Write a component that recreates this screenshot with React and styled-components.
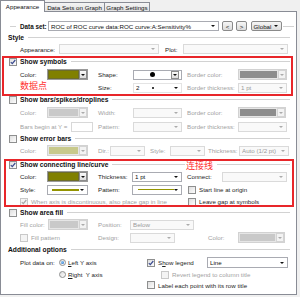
import React from "react";
import styled, { createGlobalStyle } from "styled-components";

const GlobalStyle = createGlobalStyle`
  html, body {
    margin: 0;
    padding: 0;
    background: #f0f0f0;
  }
  body {
    font-family: "Liberation Sans", Arial, sans-serif;
    font-size: 6.2px;
    color: #1e1e1e;
  }
`;

const Window = styled.div`
  width: 300px;
  height: 297px;
  background: #f0f0f0;
  overflow: hidden;
`;

const TabBar = styled.div`
  display: flex;
  align-items: flex-end;
  height: 11px;
  padding-left: 1px;
`;

const Tab = styled.div`
  position: relative;
  z-index: ${(p) => (p.$active ? 2 : 1)};
  height: ${(p) => (p.$active ? 12 : 9)}px;
  margin-bottom: ${(p) => (p.$active ? -1 : 0)}px;
  margin-left: -1px;
  width: ${(p) => p.$w}px;
  box-sizing: border-box;
  border: 1px solid #898c95;
  border-bottom: none;
  background: ${(p) => (p.$active ? "#fff" : "linear-gradient(#f4f4f4, #e2e2e2)")};
  display: flex;
  align-items: center;
  justify-content: center;
  white-space: nowrap;
  color: #111;
`;

const Panel = styled.div`
  position: relative;
  width: 297px;
  height: 284px;
  box-sizing: border-box;
  border: 1px solid #898c95;
  background: #fff;
  padding-top: 8px;
`;

const Row = styled.div`
  display: flex;
  align-items: center;
  height: ${(p) => p.$h || 13}px;
  margin-top: ${(p) => p.$mt || 0}px;
  padding-left: ${(p) => (p.$pl === undefined ? 19 : p.$pl)}px;
  white-space: nowrap;
`;

const Label = styled.span`
  flex: none;
  width: ${(p) => p.$w}px;
  margin-left: ${(p) => p.$ml || 0}px;
  color: ${(p) => (p.$off ? "#a2a2a2" : "#1e1e1e")};
  white-space: nowrap;
  overflow: visible;
`;

const Note = styled.span`
  flex: none;
  width: ${(p) => p.$w}px;
  margin-bottom: 4px;
  font-family: "Noto Sans CJK SC", "Liberation Sans", sans-serif;
  font-size: 9px;
  line-height: 9px;
  color: #ff3030;
`;

const FloatNote = styled(Note)`
  position: absolute;
  left: 184px;
  top: 2px;
  margin: 0;
  background: #fff;
  padding: 0 1px;
`;

const Title = styled.span`
  flex: none;
  width: ${(p) => (p.$w ? `${p.$w}px` : "auto")};
  font-weight: bold;
  font-size: ${(p) => p.$size || 6.7}px;
  color: #111;
  white-space: nowrap;
`;

const Rule = styled.span`
  flex: ${(p) => (p.$w ? "none" : 1)};
  width: ${(p) => (p.$w ? `${p.$w}px` : "auto")};
  height: 1px;
  background: #d2d2d2;
  margin-left: ${(p) => (p.$ml === undefined ? 4 : p.$ml)}px;
  margin-right: ${(p) => (p.$mr === undefined ? 6 : p.$mr)}px;
`;

const Combo = styled.div`
  flex: none;
  display: flex;
  align-items: center;
  width: ${(p) => p.$w}px;
  height: ${(p) => p.$h || 10}px;
  margin-left: ${(p) => p.$ml || 0}px;
  box-sizing: border-box;
  border: 1px solid ${(p) => (p.$off ? "#dadada" : p.$faint ? "#e4e4e4" : "#a9abb2")};
  background: ${(p) => (p.$off ? "#f9f9f9" : "#fff")};
  color: ${(p) => (p.$off ? "#9a9a9a" : "#111")};
  padding: 0 2px 0 2px;
  overflow: hidden;
`;

const ComboText = styled.span`
  flex: 1;
  overflow: hidden;
  white-space: nowrap;
`;

const Arrow = styled.span`
  flex: none;
  width: 0;
  height: 0;
  border-left: 2px solid transparent;
  border-right: 2px solid transparent;
  border-top: 2.5px solid ${(p) => (p.$off ? "#ababab" : "#111")};
  margin-right: 1px;
`;

const ArrowButton = styled.span`
  flex: none;
  width: 8px;
  height: 100%;
  box-sizing: border-box;
  border: 1px solid ${(p) => (p.$off ? "#d4d4d4" : "#8c8c8c")};
  background: ${(p) => (p.$off ? "#f3f3f3" : "linear-gradient(#fafafa, #dedede)")};
  display: flex;
  align-items: center;
  justify-content: center;
`;

const SwatchBox = styled.div`
  flex: none;
  display: flex;
  width: ${(p) => p.$w}px;
  height: 11px;
  margin-left: ${(p) => p.$ml || 0}px;
  box-sizing: border-box;
  border: 1px solid ${(p) => (p.$off ? "#d2d2d2" : "#9a9a9a")};
  background: #fff;
`;

const Swatch = styled.span`
  flex: 1;
  background: ${(p) => p.$color};
  border: 1px solid ${(p) => (p.$off ? "#e6e6e6" : "#6d6d2a")};
`;

const Dot = styled.span`
  flex: none;
  width: ${(p) => p.$s}px;
  height: ${(p) => p.$s}px;
  border-radius: 50%;
  background: #000;
  margin-left: ${(p) => p.$ml || 0}px;
`;

const LineSample = styled.span`
  flex: none;
  width: ${(p) => p.$w}px;
  height: ${(p) => p.$t}px;
  background: #949400;
  margin-left: ${(p) => p.$ml || 0}px;
`;

const Field = styled.span`
  flex: none;
  width: ${(p) => p.$w}px;
  height: 10px;
  box-sizing: border-box;
  border: 1px solid #d8d8d8;
  background: #fff;
`;

const Button = styled.div`
  flex: none;
  display: flex;
  align-items: center;
  justify-content: center;
  gap: 3px;
  width: ${(p) => p.$w}px;
  height: 10px;
  margin-left: ${(p) => p.$ml || 0}px;
  box-sizing: border-box;
  border: 1px solid #8a8a8a;
  border-radius: 2px;
  background: linear-gradient(#f6f6f6, #dcdcdc);
  color: #111;
`;

const Slot = styled.div`
  flex: none;
  display: flex;
  align-items: center;
  width: ${(p) => p.$w}px;
  margin-left: ${(p) => p.$ml || 0}px;
`;

const Box = styled.span`
  flex: none;
  width: 8px;
  height: 8px;
  box-sizing: border-box;
  border: 1px solid ${(p) => (p.$off ? "#c9c9c9" : "#8e8f8f")};
  background: ${(p) => (p.$off ? "#f4f4f4" : "linear-gradient(135deg, #dedede, #fdfdfd)")};
  display: flex;
  align-items: center;
  justify-content: center;
  margin-right: 3px;
`;

const Round = styled.span`
  flex: none;
  width: 7px;
  height: 7px;
  box-sizing: border-box;
  border-radius: 50%;
  border: 1px solid #8e8f8f;
  background: linear-gradient(135deg, #dcdcdc, #fdfdfd);
  display: flex;
  align-items: center;
  justify-content: center;
  margin-right: 2px;
`;

const RoundDot = styled.span`
  width: 3px;
  height: 3px;
  border-radius: 50%;
  background: radial-gradient(circle at 35% 35%, #8fd0ff, #1f5fb8);
`;

const Key = styled.span`
  text-decoration: underline;
`;

const Marked = styled.div`
  position: relative;
  margin-top: ${(p) => p.$mt || 0}px;
  &::after {
    content: "";
    position: absolute;
    left: ${(p) => p.$l}px;
    right: ${(p) => p.$r}px;
    top: ${(p) => p.$t}px;
    bottom: ${(p) => p.$b}px;
    border: 2px solid #e8262a;
    pointer-events: none;
  }
`;

const Check = ({ on, off }) => (
  <Box $off={off}>
    {on && (
      <svg width="6" height="6" viewBox="0 0 6 6">
        <path
          d="M0.8 3.1 L2.3 4.6 L5.3 1"
          fill="none"
          stroke={off ? "#a8a8a8" : "#3b4b90"}
          strokeWidth="1.2"
        />
      </svg>
    )}
  </Box>
);

const Header = ({ on, children }) => (
  <Row $h={11} $pl={8}>
    <Check on={on} />
    <Title>{children}</Title>
    <Rule />
  </Row>
);

const Drop = ({ w, ml, off, faint, btn, text, children, h }) => (
  <Combo $w={w} $ml={ml} $off={off} $faint={faint} $h={h}>
    {children || <ComboText>{text}</ComboText>}
    {btn ? (
      <ArrowButton $off={off}>
        <Arrow $off={off} style={{ marginRight: 0 }} />
      </ArrowButton>
    ) : (
      <Arrow $off={off} />
    )}
  </Combo>
);

const ColorPick = ({ w, ml, color, off }) => (
  <SwatchBox $w={w} $ml={ml} $off={off}>
    <Swatch $color={color} $off={off} />
    <ArrowButton $off={off}>
      <Arrow $off={off} style={{ marginRight: 0 }} />
    </ArrowButton>
  </SwatchBox>
);

export default function App() {
  return (
    <Window>
      <GlobalStyle />
      <TabBar>
        <Tab $active $w={45}>Appearance</Tab>
        <Tab $w={61}>Data Sets on Graph</Tab>
        <Tab $w={46}>Graph Settings</Tab>
      </TabBar>
      <Panel>
        <Row $h={12} $pl={9}>
          <Rule $w={6} $ml={0} $mr={4} />
          <Title $w={28} $size={6.3}>Data set:</Title>
          <Drop w={171} text="ROC of ROC curve data:ROC curve:A:Sensitivity%" />
          <Button $w={11} $ml={3}>&lt;</Button>
          <Button $w={11} $ml={3}>&gt;</Button>
          <Button $w={31} $ml={4}>
            Global <Arrow />
          </Button>
          <Rule $ml={1} $mr={2} />
        </Row>

        <Row $h={11} $pl={7}>
          <Title>Style</Title>
          <Rule />
        </Row>
        <Row $h={12}>
          <Label $w={39}>Appearance:</Label>
          <Drop w={100} off text="" />
          <Label $w={18} $ml={6}>Plot:</Label>
          <Drop w={105} off text="" />
        </Row>

        <Marked $mt={1} $l={1} $r={3} $t={0} $b={-2}>
          <Header on>Show symbols</Header>
          <Row $mt={1}>
            <Label $w={27}>Color:</Label>
            <ColorPick w={41} color="#808000" />
            <Label $w={35} $ml={10}>Shape:</Label>
            <Drop w={49} btn>
              <ComboText>
                <Dot $s={5} $ml={14} style={{ display: "inline-block" }} />
              </ComboText>
            </Drop>
            <Label $w={51} $ml={5} $off>Border color:</Label>
            <ColorPick w={49} color="#8d8d8d" off />
          </Row>
          <Row>
            <Note $w={78}>数据点</Note>
            <Label $w={35}>Size:</Label>
            <Drop w={49} faint>
              <ComboText style={{ display: "flex", alignItems: "center" }}>
                2
                <Dot $s={2} $ml={13} />
              </ComboText>
            </Drop>
            <Label $w={51} $ml={5} $off>Border thickness:</Label>
            <Drop w={49} off text="1 pt" />
          </Row>
        </Marked>

        <Header>Show bars/spikes/droplines</Header>
        <Row $mt={1}>
          <Label $w={27} $off>Color:</Label>
          <ColorPick w={41} color="#c9c9c9" off />
          <Label $w={35} $ml={10} $off>Width:</Label>
          <Drop w={49} off text="" />
          <Label $w={51} $ml={5} $off>Border color:</Label>
          <ColorPick w={48} color="#8d8d8d" off />
        </Row>
        <Row $mt={1}>
          <Label $w={51} $off>Bars begin at Y =</Label>
          <Field $w={22} />
          <Label $w={35} $ml={5} $off>Pattern:</Label>
          <Drop w={49} off text="" />
          <Label $w={51} $ml={5} $off>Border thickness:</Label>
          <Drop w={49} off text="" />
        </Row>

        <Header>Show error bars</Header>
        <Row>
          <Label $w={27} $off>Color:</Label>
          <ColorPick w={41} color="#c8c98c" off />
          <Label $w={12} $ml={10} $off>Dir.:</Label>
          <Drop w={35} off text="" />
          <Label $w={20} $ml={5} $off>Style:</Label>
          <Drop w={35} off text="" />
          <Label $w={31} $ml={3} $off>Thickness:</Label>
          <Drop w={50} off text="Auto (1/2 pt)" />
        </Row>

        <Marked $mt={2} $l={3} $r={2} $t={0} $b={0}>
          <Header on>Show connecting line/curve</Header>
          <FloatNote $w={30}>连接线</FloatNote>
          <Row>
            <Label $w={27}>Color:</Label>
            <ColorPick w={41} color="#808000" />
            <Label $w={34} $ml={10}>Thickness:</Label>
            <Drop w={50} text="1 pt" />
            <Label $w={35} $ml={5}>Connect:</Label>
            <Drop w={65} off text="" />
          </Row>
          <Row>
            <Label $w={27}>Style:</Label>
            <Drop w={41}>
              <ComboText style={{ display: "flex" }}>
                <LineSample $w={27} $t={2} $ml={2} />
              </ComboText>
            </Drop>
            <Label $w={34} $ml={10}>Pattern:</Label>
            <Drop w={50}>
              <ComboText style={{ display: "flex" }}>
                <LineSample $w={36} $t={1} $ml={3} />
              </ComboText>
            </Drop>
            <Slot $w={80} $ml={6}>
              <Check />
              <Label>Start line at origin</Label>
            </Slot>
          </Row>
          <Row $h={11}>
            <Slot $w={168}>
              <Check on off />
              <Label $off>When axis is discontinuous, also place gap in line</Label>
            </Slot>
            <Check />
            <Label>Leave gap at symbols</Label>
          </Row>
        </Marked>

        <Header>Show area fill</Header>
        <Row>
          <Label $w={28} $off>Fill color:</Label>
          <ColorPick w={40} color="#c9c9c9" off />
          <Label $w={32} $ml={10} $off>Position:</Label>
          <Drop w={64} off text="Below" />
        </Row>
        <Row>
          <Slot $w={78}>
            <Check off />
            <Label $off>Fill pattern</Label>
          </Slot>
          <Label $w={32} $off>Design:</Label>
          <Drop w={45} off text="" />
          <Label $w={30} $ml={33} $off>Color:</Label>
          <ColorPick w={47} color="#c9c9c9" off />
        </Row>

        <Row $h={11} $pl={7}>
          <Title>Additional options</Title>
          <Rule />
        </Row>
        <Row $mt={1}>
          <Slot $w={127}>
            <Label $w={39}>Plot data on:</Label>
            <Round>
              <RoundDot />
            </Round>
            <Label>
              <Key>L</Key>eft Y axis
            </Label>
          </Slot>
          <Slot $w={60}>
            <Check on />
            <Label>
              S<Key>h</Key>ow legend
            </Label>
          </Slot>
          <Drop w={81} h={11} text="Line" />
        </Row>
        <Row $h={11}>
          <Slot $w={141}>
            <Label $w={39} />
            <Round />
            <Label>
              <Key>R</Key>ight&nbsp; Y axis
            </Label>
          </Slot>
          <Check off />
          <Label $off>Revert legend to column title</Label>
        </Row>
        <Row $h={10} $pl={146}>
          <Check />
          <Label>Label each point with its row title</Label>
        </Row>
      </Panel>
    </Window>
  );
}
